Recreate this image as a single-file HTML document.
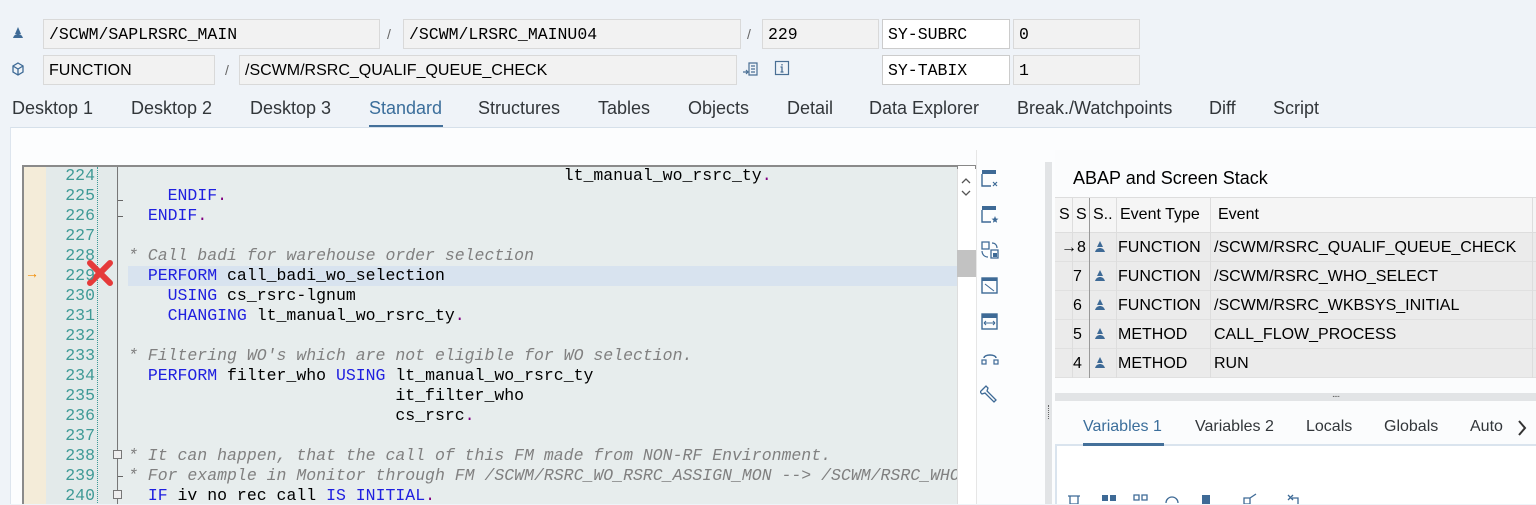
<!DOCTYPE html>
<html><head><meta charset="utf-8"><style>
*{margin:0;padding:0;box-sizing:border-box}
body{width:1536px;height:504px;overflow:hidden;background:#eff3f8;font-family:"Liberation Sans",sans-serif;color:#32363a;position:relative}
.a{position:absolute}
.f{position:absolute;background:#f2f2f2;border:1px solid #d9d9d9;font-size:16px;padding-left:5px;line-height:29px;color:#000}
.m{font-family:"Liberation Mono",monospace;font-size:16.5px}
.w{background:#fff;border-color:#ccc}
.sl{position:absolute;color:#666;font-size:14px}
.tab{position:absolute;top:98px;font-size:18px;color:#32363a}
.code{position:absolute;left:22px;top:165px;width:935px;height:339px;border:2px solid #8a8a8a;border-right:none;border-bottom:none;background:#e7eded;overflow:hidden}
.ln{position:absolute;left:45px;width:50px;text-align:right;font-family:"Liberation Mono",monospace;font-size:16.5px;color:#3f9a96}
.cl{position:absolute;left:128px;font-family:"Liberation Mono",monospace;font-size:16.5px;white-space:pre;color:#000}
.k{color:#2020e0}.c{color:#808080;font-style:italic}.p{color:#800080}
.tb{position:absolute;width:1px;background:#999}
.th{position:absolute;font-size:16px;color:#000}
.row{position:absolute;left:1055px;width:481px;height:29px;background:#ebebeb;border-bottom:1px solid #e0e0e0}
.rt{position:absolute;font-size:16px;color:#000;line-height:29px}
.ic{position:absolute;left:980px}
</style></head><body>
<svg class="a" style="left:11px;top:26px" width="14" height="14" viewBox="0 0 14 14"><path d="M7 1L4 8h6z M2 12c1-3 3-4 5-4s4 1 5 4z" fill="#3e6a96"/></svg>
<div class="f m" style="left:43px;top:19px;width:337px;height:30px">/SCWM/SAPLRSRC_MAIN</div>
<div class="sl" style="left:387px;top:26px">/</div>
<div class="f m" style="left:403px;top:19px;width:338px;height:30px">/SCWM/LRSRC_MAINU04</div>
<div class="sl" style="left:747px;top:26px">/</div>
<div class="f m" style="left:762px;top:19px;width:117px;height:30px">229</div>
<div class="f m w" style="left:882px;top:19px;width:128px;height:30px">SY-SUBRC</div>
<div class="f m" style="left:1013px;top:19px;width:127px;height:30px">0</div>
<svg class="a" style="left:11px;top:62px" width="14" height="14" viewBox="0 0 14 14"><path d="M7 1l5 3v6l-5 3-5-3V4z M2 4l5 3 5-3 M7 7v6" fill="none" stroke="#3e6a96" stroke-width="1.3"/></svg>
<div class="f" style="left:43px;top:55px;width:172px;height:30px">FUNCTION</div>
<div class="sl" style="left:225px;top:62px">/</div>
<div class="f" style="left:239px;top:55px;width:498px;height:30px">/SCWM/RSRC_QUALIF_QUEUE_CHECK</div>
<svg class="a" style="left:742px;top:60px" width="18" height="18" viewBox="0 0 18 18"><path d="M7 3h8v12H7z M9 6h4 M9 9h4 M9 12h4 M1 12h5 M4 10l2 2-2 2" fill="none" stroke="#4a6f94" stroke-width="1.2"/></svg>
<svg class="a" style="left:774px;top:60px" width="16" height="16" viewBox="0 0 16 16"><rect x="1.5" y="1.5" width="13" height="13" fill="none" stroke="#4a6f94" stroke-width="1.2"/><path d="M8 4v1.5 M6.5 7H8v5 M6.5 12h3" stroke="#4a6f94" stroke-width="1.3" fill="none"/></svg>
<div class="f m w" style="left:882px;top:55px;width:128px;height:30px">SY-TABIX</div>
<div class="f m" style="left:1013px;top:55px;width:127px;height:30px">1</div>
<div class="tab" style="left:12px">Desktop 1</div>
<div class="tab" style="left:131px">Desktop 2</div>
<div class="tab" style="left:250px">Desktop 3</div>
<div class="tab" style="left:369px;color:#3b6e9b">Standard</div>
<div class="a" style="left:369px;top:125px;width:74px;height:3px;background:#44709a"></div>
<div class="tab" style="left:478px">Structures</div>
<div class="tab" style="left:598px">Tables</div>
<div class="tab" style="left:688px">Objects</div>
<div class="tab" style="left:787px">Detail</div>
<div class="tab" style="left:869px">Data Explorer</div>
<div class="tab" style="left:1017px">Break./Watchpoints</div>
<div class="tab" style="left:1209px">Diff</div>
<div class="tab" style="left:1273px">Script</div>
<div class="a" style="left:10px;top:127px;width:1526px;height:377px;background:#fcfdfe;border-top:1px solid #d6e0ea;border-left:1px solid #dde5ee"></div>
<div class="code">
 <div class="a" style="left:0;top:0;width:22px;height:340px;background:#f4ecd9"></div>
 <div class="a" style="left:22px;top:0;width:73px;height:340px;background:#e3eaea"></div>
 <div class="a" style="left:73px;top:0;width:0;height:340px;border-left:1px dotted #3f9a96"></div>
 <div class="a" style="left:93px;top:0;width:1px;height:340px;background:#777"></div>
 <div class="a" style="left:104px;top:99px;width:840px;height:20px;background:#d8e3ef"></div>
</div>
<div class="a" style="left:25px;top:265px;color:#f08a00;font-size:14px;font-weight:bold">→</div>
<svg class="a" style="left:84px;top:257px" width="32" height="32" viewBox="0 0 32 32"><path d="M6 6L26 26 M26 6L6 26" stroke="#e53a3a" stroke-width="6" stroke-linecap="round"/></svg>
<div class="ln" style="top:166px">224</div><div class="ln" style="top:186px">225</div><div class="ln" style="top:206px">226</div><div class="ln" style="top:226px">227</div><div class="ln" style="top:246px">228</div><div class="ln" style="top:266px">229</div><div class="ln" style="top:286px">230</div><div class="ln" style="top:306px">231</div><div class="ln" style="top:326px">232</div><div class="ln" style="top:346px">233</div><div class="ln" style="top:366px">234</div><div class="ln" style="top:386px">235</div><div class="ln" style="top:406px">236</div><div class="ln" style="top:426px">237</div><div class="ln" style="top:446px">238</div><div class="ln" style="top:466px">239</div><div class="ln" style="top:486px">240</div>
<div class="cl" style="top:166px">                                            lt_manual_wo_rsrc_ty<span class="p">.</span></div>
<div class="cl" style="top:186px">    <span class="k">ENDIF</span><span class="p">.</span></div>
<div class="cl" style="top:206px">  <span class="k">ENDIF</span><span class="p">.</span></div>
<div class="cl c" style="top:246px">* Call badi for warehouse order selection</div>
<div class="cl" style="top:266px">  <span class="k">PERFORM</span> call_badi_wo_selection</div>
<div class="cl" style="top:286px">    <span class="k">USING</span> cs_rsrc-lgnum</div>
<div class="cl" style="top:306px">    <span class="k">CHANGING</span> lt_manual_wo_rsrc_ty<span class="p">.</span></div>
<div class="cl c" style="top:346px">* Filtering WO's which are not eligible for WO selection.</div>
<div class="cl" style="top:366px">  <span class="k">PERFORM</span> filter_who <span class="k">USING</span> lt_manual_wo_rsrc_ty</div>
<div class="cl" style="top:386px">                           it_filter_who</div>
<div class="cl" style="top:406px">                           cs_rsrc<span class="p">.</span></div>
<div class="cl c" style="top:446px">* It can happen, that the call of this FM made from NON-RF Environment.</div>
<div class="cl c" style="top:466px">* For example in Monitor through FM /SCWM/RSRC_WO_RSRC_ASSIGN_MON --&gt; /SCWM/RSRC_WHO</div>
<div class="cl" style="top:486px">  <span class="k">IF</span> iv no rec call <span class="k">IS</span> <span class="k">INITIAL</span><span class="p">.</span></div>
<div class="a" style="left:118px;top:200px;width:5px;height:1px;background:#666"></div>
<div class="a" style="left:118px;top:216px;width:5px;height:1px;background:#666"></div>
<div class="a" style="left:113px;top:450px;width:9px;height:9px;border:1px solid #777;background:#eee"></div>
<div class="a" style="left:118px;top:476px;width:5px;height:1px;background:#666"></div>
<div class="a" style="left:113px;top:490px;width:9px;height:9px;border:1px solid #777;background:#eee"></div>
<div class="a" style="left:957px;top:165px;width:19px;height:339px;background:#fff;border-left:1px solid #ddd"></div>
<div class="a" style="left:957px;top:165px;width:19px;height:4px;border:1px solid #888;border-bottom:none"></div>
<svg class="a" style="left:960px;top:176px" width="12" height="22" viewBox="0 0 12 22"><path d="M2 7l4-4 4 4 M2 15l4 4 4-4" fill="none" stroke="#555" stroke-width="1.3"/></svg>
<div class="a" style="left:957px;top:250px;width:19px;height:27px;background:#c2c2c2"></div>
<div class="a" style="left:976px;top:150px;width:1px;height:354px;background:#e6e6e6"></div>
<svg class="ic" style="top:168px" width="20" height="20" viewBox="0 0 20 20"><path d="M2 2h14v4H2z" fill="#3e6a96"/><path d="M2 6v12h9" fill="none" stroke="#3e6a96" stroke-width="1.4"/><path d="M13 14l4 4M17 14l-4 4" stroke="#3e6a96" stroke-width="1.2"/></svg>
<svg class="ic" style="top:204px" width="20" height="20" viewBox="0 0 20 20"><path d="M2 2h14v4H2z" fill="#3e6a96"/><path d="M2 6v12h9" fill="none" stroke="#3e6a96" stroke-width="1.4"/><path d="M15 12l1 2.5 2.5.3-2 1.5.6 2.5-2.1-1.3-2.1 1.3.6-2.5-2-1.5 2.5-.3z" fill="#3e6a96"/></svg>
<svg class="ic" style="top:240px" width="20" height="20" viewBox="0 0 20 20"><path d="M2 2h7v7H2z M11 10h7v8h-7z" fill="none" stroke="#3e6a96" stroke-width="1.3"/><rect x="13" y="13" width="4" height="4" fill="#3e6a96"/><path d="M12 3c3 0 5 2 5 5 M2 11c0 3 2 6 6 6" fill="none" stroke="#3e6a96" stroke-width="1.2"/></svg>
<svg class="ic" style="top:276px" width="20" height="20" viewBox="0 0 20 20"><rect x="2" y="2" width="15" height="15" fill="none" stroke="#3e6a96" stroke-width="1.4"/><path d="M2 2h15v3H2z" fill="#3e6a96"/><path d="M5 8l9 7" stroke="#3e6a96" stroke-width="1.1"/></svg>
<svg class="ic" style="top:312px" width="20" height="20" viewBox="0 0 20 20"><rect x="2" y="2" width="15" height="15" fill="none" stroke="#3e6a96" stroke-width="1.4"/><path d="M2 2h15v4H2z" fill="#3e6a96"/><path d="M4 11h11 M4 11l2-2M4 11l2 2M15 11l-2-2M15 11l-2 2" stroke="#3e6a96" stroke-width="1.1" fill="none"/></svg>
<svg class="ic" style="top:348px" width="20" height="20" viewBox="0 0 20 20"><path d="M4 10c0-4 12-4 12 0" fill="none" stroke="#3e6a96" stroke-width="1.5"/><rect x="2" y="12" width="4" height="4" fill="none" stroke="#3e6a96" stroke-width="1.2"/><rect x="14" y="12" width="4" height="4" fill="none" stroke="#3e6a96" stroke-width="1.2"/></svg>
<svg class="ic" style="top:384px" width="20" height="20" viewBox="0 0 20 20"><path d="M3 5l3-3 2 2-1 3 9 9-2 2-9-9-3 1-2-2z" fill="none" stroke="#3e6a96" stroke-width="1.3"/></svg>
<div class="a" style="left:1045px;top:162px;width:7px;height:342px;background:#e2e4e6"></div>
<div class="a" style="left:1048px;top:405px;width:1px;height:14px;border-left:1px dotted #666"></div>
<div class="a" style="left:1055px;top:150px;width:481px;height:354px;background:#fbfcfd"></div>
<div class="a" style="left:1073px;top:168px;font-size:18px;color:#000">ABAP and Screen Stack</div>
<div class="a" style="left:1055px;top:197px;width:481px;height:36px;background:#f5f5f5;border-top:1px solid #ddd;border-bottom:1px solid #ddd"></div>
<div class="th" style="left:1059px;top:206px">S</div><div class="th" style="left:1076px;top:206px">S</div><div class="th" style="left:1093px;top:206px">S..</div><div class="th" style="left:1120px;top:206px">Event Type</div><div class="th" style="left:1218px;top:206px">Event</div>
<div class="row" style="top:233px"></div><div class="row" style="top:262px"></div><div class="row" style="top:291px"></div><div class="row" style="top:320px"></div><div class="row" style="top:349px"></div>
<div class="tb" style="left:1072px;top:198px;height:180px;background:#ddd"></div>
<div class="tb" style="left:1089px;top:198px;height:180px;background:#999"></div>
<div class="tb" style="left:1116px;top:198px;height:180px;background:#ddd"></div>
<div class="tb" style="left:1210px;top:198px;height:180px;background:#ddd"></div>
<div class="tb" style="left:1532px;top:198px;height:180px;background:#ddd"></div>
<div class="rt" style="left:1061px;top:233px">→8</div>
<div class="rt" style="left:1073px;top:262px">7</div>
<div class="rt" style="left:1073px;top:291px">6</div>
<div class="rt" style="left:1073px;top:320px">5</div>
<div class="rt" style="left:1073px;top:349px">4</div>
<svg class="a" style="left:1094px;top:240px" width="12" height="130" viewBox="0 0 12 130"><g fill="#3e6a96"><path d="M6 1L3 7h6zM1 12c1-3 3-4 5-4s4 1 5 4z"/><path transform="translate(0,29)" d="M6 1L3 7h6zM1 12c1-3 3-4 5-4s4 1 5 4z"/><path transform="translate(0,58)" d="M6 1L3 7h6zM1 12c1-3 3-4 5-4s4 1 5 4z"/><path transform="translate(0,87)" d="M6 1L3 7h6zM1 12c1-3 3-4 5-4s4 1 5 4z"/><path transform="translate(0,116)" d="M6 1L3 7h6zM1 12c1-3 3-4 5-4s4 1 5 4z"/></g></svg>
<div class="rt" style="left:1118px;top:233px">FUNCTION</div><div class="rt" style="left:1214px;top:233px">/SCWM/RSRC_QUALIF_QUEUE_CHECK</div>
<div class="rt" style="left:1118px;top:262px">FUNCTION</div><div class="rt" style="left:1214px;top:262px">/SCWM/RSRC_WHO_SELECT</div>
<div class="rt" style="left:1118px;top:291px">FUNCTION</div><div class="rt" style="left:1214px;top:291px">/SCWM/RSRC_WKBSYS_INITIAL</div>
<div class="rt" style="left:1118px;top:320px">METHOD</div><div class="rt" style="left:1214px;top:320px">CALL_FLOW_PROCESS</div>
<div class="rt" style="left:1118px;top:349px">METHOD</div><div class="rt" style="left:1214px;top:349px">RUN</div>
<div class="a" style="left:1055px;top:393px;width:481px;height:8px;background:#e2e4e6"></div>
<div class="a" style="left:1332px;top:389px;font-size:10px;color:#555;letter-spacing:-1px">....</div>
<div class="a" style="left:1083px;top:418px;font-size:16px;color:#3b6e9b">Variables 1</div>
<div class="a" style="left:1195px;top:418px;font-size:16px">Variables 2</div>
<div class="a" style="left:1306px;top:418px;font-size:16px">Locals</div>
<div class="a" style="left:1384px;top:418px;font-size:16px">Globals</div>
<div class="a" style="left:1470px;top:418px;font-size:16px">Auto</div>
<svg class="a" style="left:1516px;top:419px" width="12" height="18" viewBox="0 0 12 18"><path d="M3 2l6 7-6 7" fill="none" stroke="#333" stroke-width="2"/></svg>
<div class="a" style="left:1055px;top:444px;width:481px;height:60px;background:#fff;border:2px solid #dae4ee;border-right:none;border-bottom:none"></div>
<div class="a" style="left:1083px;top:443px;width:81px;height:3px;background:#44709a"></div>
<svg class="a" style="left:1066px;top:493px" width="260" height="11" viewBox="0 0 260 11"><g fill="none" stroke="#3e6a96" stroke-width="1.3"><path d="M2 3h12M4 3v8h8V3"/><path d="M68 2h5v5h-5zM76 2h5v5h-5z"/><path d="M100 10a6 6 0 0 1 12 0"/><path d="M178 5h6v6h-6zM184 5l6-4"/><path d="M222 2l5 5M227 2l-5 5M226 5h6v6"/></g><g fill="#3e6a96"><rect x="36" y="2" width="6" height="6"/><rect x="44" y="2" width="6" height="6"/><path d="M136 2h8v9h-8z"/></g></svg>
</body></html>
